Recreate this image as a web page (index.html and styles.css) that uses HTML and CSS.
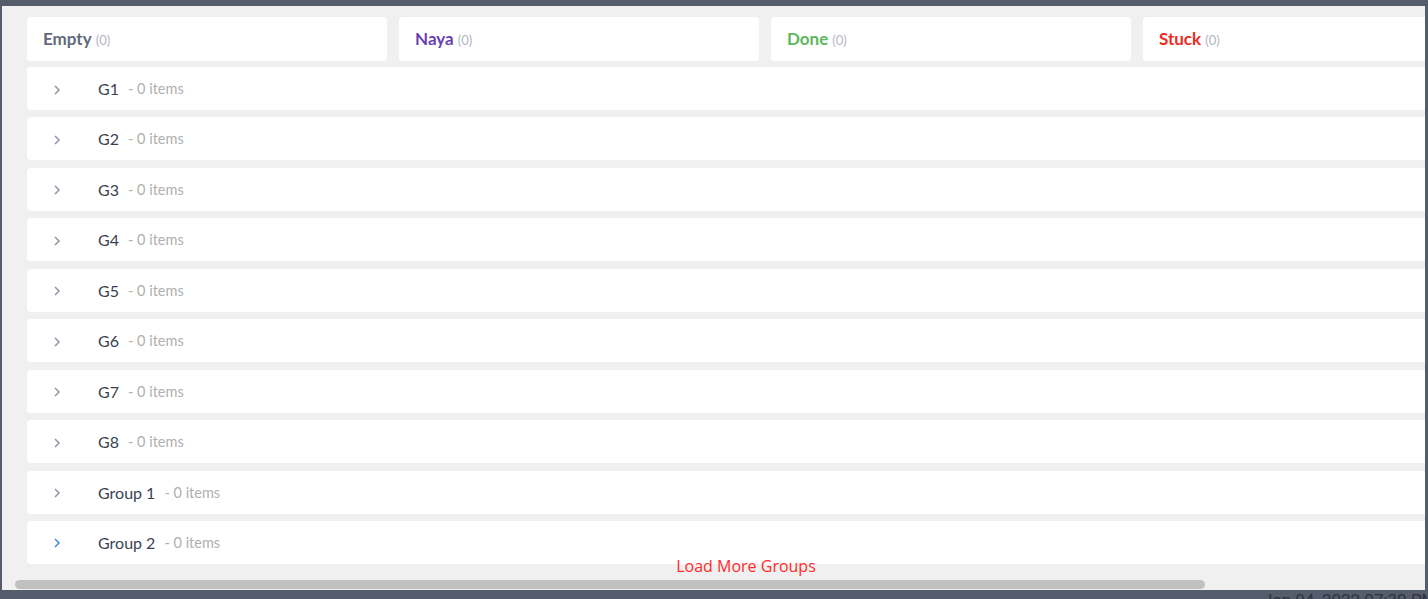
FILE: index.html
```html
<!DOCTYPE html>
<html>
<head>
<meta charset="utf-8">
<link rel="stylesheet" href="styles.css">
</head>
<body>
<div class="topstrip"></div>
<div class="panel">
  <div class="board">
    <div class="headers">
      <div class="hcard"><span class="hname empty">Empty</span><span class="hcount">(0)</span></div>
      <div class="hcard"><span class="hname naya">Naya</span><span class="hcount">(0)</span></div>
      <div class="hcard"><span class="hname done">Done</span><span class="hcount">(0)</span></div>
      <div class="hcard"><span class="hname stuck">Stuck</span><span class="hcount">(0)</span></div>
    </div>
    <div class="groups">
      <div class="grow"><span class="chev"><svg width="8" height="12" viewBox="0 0 8 12"><path d="M2 2 L6 6 L2 10" fill="none" stroke="currentColor" stroke-width="1.5"/></svg></span><span class="gname">G1</span><span class="gcount">- 0 items</span></div>
      <div class="grow"><span class="chev"><svg width="8" height="12" viewBox="0 0 8 12"><path d="M2 2 L6 6 L2 10" fill="none" stroke="currentColor" stroke-width="1.5"/></svg></span><span class="gname">G2</span><span class="gcount">- 0 items</span></div>
      <div class="grow"><span class="chev"><svg width="8" height="12" viewBox="0 0 8 12"><path d="M2 2 L6 6 L2 10" fill="none" stroke="currentColor" stroke-width="1.5"/></svg></span><span class="gname">G3</span><span class="gcount">- 0 items</span></div>
      <div class="grow"><span class="chev"><svg width="8" height="12" viewBox="0 0 8 12"><path d="M2 2 L6 6 L2 10" fill="none" stroke="currentColor" stroke-width="1.5"/></svg></span><span class="gname">G4</span><span class="gcount">- 0 items</span></div>
      <div class="grow"><span class="chev"><svg width="8" height="12" viewBox="0 0 8 12"><path d="M2 2 L6 6 L2 10" fill="none" stroke="currentColor" stroke-width="1.5"/></svg></span><span class="gname">G5</span><span class="gcount">- 0 items</span></div>
      <div class="grow"><span class="chev"><svg width="8" height="12" viewBox="0 0 8 12"><path d="M2 2 L6 6 L2 10" fill="none" stroke="currentColor" stroke-width="1.5"/></svg></span><span class="gname">G6</span><span class="gcount">- 0 items</span></div>
      <div class="grow"><span class="chev"><svg width="8" height="12" viewBox="0 0 8 12"><path d="M2 2 L6 6 L2 10" fill="none" stroke="currentColor" stroke-width="1.5"/></svg></span><span class="gname">G7</span><span class="gcount">- 0 items</span></div>
      <div class="grow"><span class="chev"><svg width="8" height="12" viewBox="0 0 8 12"><path d="M2 2 L6 6 L2 10" fill="none" stroke="currentColor" stroke-width="1.5"/></svg></span><span class="gname">G8</span><span class="gcount">- 0 items</span></div>
      <div class="grow"><span class="chev"><svg width="8" height="12" viewBox="0 0 8 12"><path d="M2 2 L6 6 L2 10" fill="none" stroke="currentColor" stroke-width="1.5"/></svg></span><span class="gname">Group 1</span><span class="gcount">- 0 items</span></div>
      <div class="grow"><span class="chev active"><svg width="8" height="12" viewBox="0 0 8 12"><path d="M2 2 L6 6 L2 10" fill="none" stroke="currentColor" stroke-width="1.5"/></svg></span><span class="gname">Group 2</span><span class="gcount">- 0 items</span></div>
    </div>
    <div class="loadmore">Load More Groups</div>
  </div>
  <div class="hscroll"><div class="thumb"></div></div>
</div>
<div class="bottomstrip"><span class="date">Jan 04, 2022 07:30 PM</span></div>
</body>
</html>
```
FILE: styles.css
```css
html, body {
  margin: 0;
  padding: 0;
}
body {
  background: #555c6b;
  width: 1428px;
  height: 599px;
  overflow: hidden;
  font-family: Lato, "Open Sans", sans-serif;
}
.topstrip {
  height: 6px;
}
.panel {
  margin-left: 2px;
  width: 1423px;
  height: 584px;
  background: #f0f0f0;
  overflow: hidden;
  display: flex;
  flex-direction: column;
}
.board {
  padding: 11px 0 0 25px;
  width: 1600px;
  flex: 1;
}
.headers {
  display: flex;
  gap: 12px;
}
.hcard {
  flex: 0 0 360px;
  height: 44px;
  background: #fff;
  border-radius: 4px;
  box-sizing: border-box;
  padding: 0 0 1px 16px;
  display: flex;
  align-items: center;
}
.hname {
  font-weight: 700;
  font-size: 17px;
}
.hname.empty { color: #5f6a7a; }
.hname.naya { color: #6a3fb2; }
.hname.done { color: #5cb85c; }
.hname.stuck { color: #ea2a22; }
.hcount {
  font-size: 13px;
  color: #b3b6c2;
  margin-left: 4px;
  margin-top: 2px;
}
.groups {
  margin-top: 6px;
  display: flex;
  flex-direction: column;
  gap: 7.44px;
}
.grow {
  height: 43px;
  width: 1500px;
  background: #fff;
  border-radius: 4px;
  display: flex;
  align-items: center;
  padding-left: 20px;
}
.chev {
  width: 20px;
  display: flex;
  justify-content: center;
  color: #8e96a4;
  margin-top: 2px;
}
.chev.active {
  color: #3e8ee0;
}
.gname {
  margin-left: 31px;
  font-size: 16px;
  color: #3a4250;
}
.gcount {
  margin-left: 9px;
  font-size: 14.5px;
  color: #b0b0b0;
}
.loadmore {
  width: 1438px;
  text-align: center;
  margin-top: -8px;
  line-height: 20px;
  font-family: "Open Sans", sans-serif;
  font-size: 16px;
  color: #ff2b2b;
  position: relative;
}
.hscroll {
  height: 9px;
  margin: 0 0 1px 13px;
  flex: 0 0 auto;
}
.thumb {
  width: 1190px;
  height: 9px;
  border-radius: 5px;
  background: #c1c1c1;
}
.bottomstrip {
  height: 9px;
  overflow: hidden;
  padding-left: 1263px;
}
.date {
  font-family: Roboto, "Liberation Sans", sans-serif;
  font-size: 17px;
  line-height: 16px;
  color: #2e333e;
  white-space: nowrap;
}
```
